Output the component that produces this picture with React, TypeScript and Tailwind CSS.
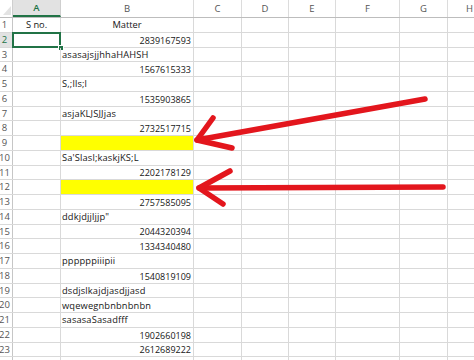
import React from "react";

type Row = { a?: string; b?: string; kind?: "num" | "text" | "head" | "fill" };

const ROWS: Row[] = [
  { a: "S no.", b: "Matter", kind: "head" },
  { b: "2839167593", kind: "num" },
  { b: "asasajsjjhhaHAHSH", kind: "text" },
  { b: "1567615333", kind: "num" },
  { b: "S,;lls;l", kind: "text" },
  { b: "1535903865", kind: "num" },
  { b: "asjaKLJSJJjas", kind: "text" },
  { b: "2732517715", kind: "num" },
  { kind: "fill" },
  { b: "Sa'Slasl;kaskjKS;L", kind: "text" },
  { b: "2202178129", kind: "num" },
  { kind: "fill" },
  { b: "2757585095", kind: "num" },
  { b: 'ddkjdjjljjp"', kind: "text" },
  { b: "2044320394", kind: "num" },
  { b: "1334340480", kind: "num" },
  { b: "ppppppiiipii", kind: "text" },
  { b: "1540819109", kind: "num" },
  { b: "dsdjslkajdjasdjjasd", kind: "text" },
  { b: "wqewegnbnbnbnbn", kind: "text" },
  { b: "sasasaSasadfff", kind: "text" },
  { b: "1902660198", kind: "num" },
  { b: "2612689222", kind: "num" },
  {},
];

const cell = "h-full shrink-0 border-r border-[#d9d9d9]";

function BCell({ row }: { row: Row }) {
  if (row.kind === "fill") return <div className={`${cell} w-[133px] bg-[#ffff00]`} />;
  const align =
    row.kind === "num"
      ? "justify-end pr-[2px] text-[9px]"
      : row.kind === "head"
        ? "justify-center"
        : "justify-start pl-[1px] tracking-[0.15px]";
  return (
    <div className={`${cell} w-[133px] flex items-end pb-[2px] whitespace-nowrap ${align}`}>
      {row.b}
    </div>
  );
}

export default function App() {
  const cols = [
    { k: "C", w: "w-[48px]" },
    { k: "D", w: "w-[47px]" },
    { k: "E", w: "w-[47px]" },
    { k: "F", w: "w-[64px]" },
    { k: "G", w: "w-[48px]" },
    { k: "H", w: "w-[44px]" },
  ];

  return (
    <div
      className="relative w-[474px] h-[360px] overflow-hidden bg-white text-[#161616] text-[9.3px] leading-none"
      style={{ fontFamily: "'Open Sans', Lato, sans-serif" }}
    >
      {/* column headers */}
      <div className="flex h-[18px] border-b border-[#bdbdbd] text-[#555] text-[9.5px]">
        <div className="w-[13px] shrink-0 h-full border-r border-[#cfcfcf] relative">
          <svg width="13" height="17" className="absolute left-0 top-0">
            <polygon points="11,6 11,15 3,15" fill="#e3e3e3" />
          </svg>
        </div>
        <div className="w-[48px] shrink-0 h-full bg-[#e2e2e2] border-r border-[#cfcfcf] border-b-2 border-b-[#217346] flex items-center justify-center text-[#217346] font-semibold">
          A
        </div>
        <div className="w-[133px] shrink-0 h-full border-r border-[#dcdcdc] flex items-center justify-center">B</div>
        {cols.map((c) => (
          <div key={c.k} className={`${c.w} shrink-0 h-full border-r border-[#dcdcdc] flex items-center justify-center`}>
            {c.k}
          </div>
        ))}
      </div>

      {ROWS.map((row, i) => (
        <div key={i} className="flex h-[14.76px] border-b border-[#d9d9d9]">
          <div
            className={`w-[13px] shrink-0 h-full overflow-hidden border-r border-[#c6c6c6] text-[9.5px] ${
              i === 1 ? "bg-[#e2e2e2] text-[#217346]" : "text-[#555]"
            }`}
          >
            <div className="w-[9px] h-full flex items-center justify-center overflow-visible whitespace-nowrap">
              {i < 23 ? i + 1 : ""}
            </div>
          </div>
          <div className={`${cell} w-[48px] relative flex items-end justify-center pb-[2px]`}>
            {row.a}
            {i === 1 && (
              <>
                <div className="absolute left-[-1px] top-[-1px] right-[-1px] bottom-[-1px] border-2 border-[#217346]" />
                <div className="absolute right-[-4px] bottom-[-4px] w-[6px] h-[6px] bg-[#217346] border border-white" />
              </>
            )}
          </div>
          <BCell row={row} />
          {cols.map((c) => (
            <div key={c.k} className={`${cell} ${c.w}`} />
          ))}
        </div>
      ))}

      {/* red arrows drawn over the sheet */}
      <svg width="474" height="360" className="absolute left-0 top-0 pointer-events-none">
        <g stroke="#e3161d" strokeWidth="5.5" strokeLinecap="round" strokeLinejoin="round" fill="none">
          <path d="M425 99 L197 140" />
          <path d="M213 118 L197 140 L232 148" />
          <path d="M443 187 L199 188" />
          <path d="M230 171 L199 188 L223 204" />
        </g>
      </svg>
    </div>
  );
}
